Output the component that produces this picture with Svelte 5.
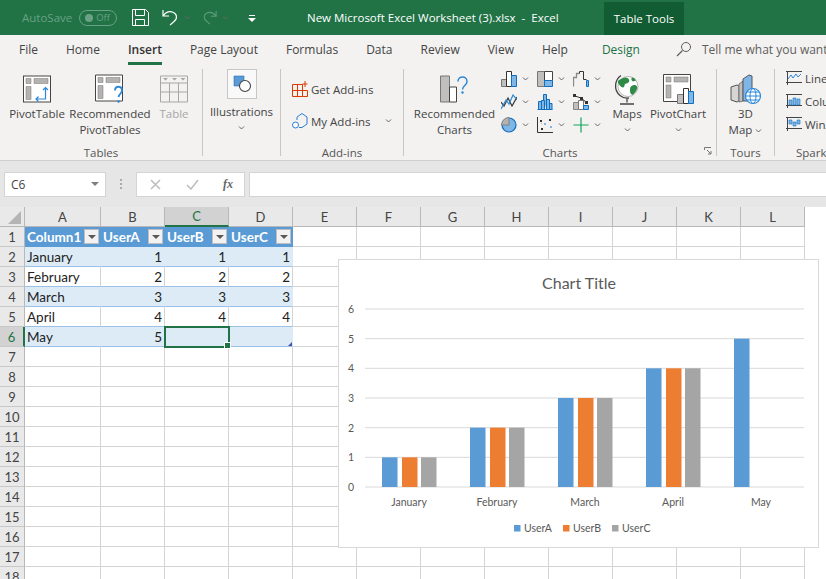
<script lang="ts">
	const tabs = ['File', 'Home', 'Insert', 'Page Layout', 'Formulas', 'Data', 'Review', 'View', 'Help'];
	const columns = ['A', 'B', 'C', 'D', 'E', 'F', 'G', 'H', 'I', 'J', 'K', 'L'];
	const rowNumbers = Array.from({ length: 18 }, (_, i) => i + 1);
	const headers = ['Column1', 'UserA', 'UserB', 'UserC'];
	const tableRows: (string | number | null)[][] = [
		['January', 1, 1, 1],
		['February', 2, 2, 2],
		['March', 3, 3, 3],
		['April', 4, 4, 4],
		['May', 5, null, null]
	];

	const series = [
		{ name: 'UserA', color: '#5b9bd5', offset: 43, values: [1, 2, 3, 4, 5] },
		{ name: 'UserB', color: '#ed7d31', offset: 63, values: [1, 2, 3, 4, 0] },
		{ name: 'UserC', color: '#a5a5a5', offset: 82, values: [1, 2, 3, 4, 0] }
	];
	const months = ['January', 'February', 'March', 'April', 'May'];
	const ticks = [0, 1, 2, 3, 4, 5, 6];
	const legendX = [175, 224, 273];
	const yFor = (value: number) => 227 - value * 29.67;
</script>

{#snippet chev(muted = false)}
	<svg class="chev" class:muted width="7" height="4" viewBox="0 0 7 4" aria-hidden="true">
		<path d="M1 .5l2.5 2.5L6 .5" fill="none" stroke="currentColor" />
	</svg>
{/snippet}

<div class="app">
	<header class="titlebar">
		<div class="qat">
			<span class="autosave">AutoSave</span>
			<span class="switch"><i></i><b>Off</b></span>
			<svg class="save" width="17" height="17" viewBox="0 0 17 17" aria-hidden="true">
				<path d="M.5.5h13l3 3v13H.5z M3.5.5v6h9v-6 M3.5 16.5v-6h9v6" fill="none" stroke="#fff" />
			</svg>
			<svg class="undo" width="17" height="17" viewBox="0 0 17 17" aria-hidden="true">
				<path d="M1 1v6h6M1.5 6.5C4 3 8 2 11.500 3.500c4 2 4 7 0 9.500L8 16" fill="none" stroke="#fff" stroke-width="1.2" />
			</svg>
			<span class="qchev">{@render chev()}</span>
			<svg class="redo" width="15" height="17" viewBox="0 0 17 17" aria-hidden="true">
				<path d="M16 1v6h-6M15.500 6.500C13 3 9 2 5.500 3.500c-4 2-4 7 0 9.500L9 16" fill="none" stroke="#5f9c7d" stroke-width="1.2" />
			</svg>
			<span class="qchev dim">{@render chev()}</span>
			<svg class="custom" width="8" height="8" viewBox="0 0 8 8" aria-hidden="true">
				<path d="M1 1h6v1H1zM0 4h8L4 8z" fill="#fff" />
			</svg>
		</div>
		<div class="doc">New Microsoft Excel Worksheet (3).xlsx  -  Excel</div>
		<div class="tool">Table Tools</div>
	</header>

	<nav class="tabs">
		{#each tabs as tab}
			<span class="tab" class:active={tab === 'Insert'}>{tab}</span>
		{/each}
		<span class="tab design">Design</span>
		<svg class="search" width="16" height="16" viewBox="0 0 16 16" aria-hidden="true">
			<circle cx="10" cy="6" r="4.500" fill="none" stroke="#605e5c" />
			<path d="M6.500 9.500L1 15" stroke="#605e5c" stroke-width="1.200" />
		</svg>
		<span class="tell">Tell me what you want to do</span>
	</nav>

	<section class="ribbon">
		<div class="group tables">
			<div class="body">
				<div class="big pivot">
					<svg width="28" height="28" viewBox="0 0 28 28" aria-hidden="true">
						<rect x=".5" y=".5" width="27" height="26" fill="#fff" stroke="#444" />
						<path d="M3 3h5v5H3zM11 3h14v5H11zM3 11h5v13H3z" fill="#b5b3b1" stroke="#777" stroke-width=".5" />
						<path d="M22.500 12v11.500H13M20 14.500l2.500-2.500 2.500 2.500M15.500 21L13 23.500l2.500 2.500" fill="none" stroke="#2b88d8" stroke-width="1.200" />
					</svg>
					<span>PivotTable</span>
				</div>
				<div class="big recommended">
					<svg width="30" height="30" viewBox="0 0 30 30" aria-hidden="true">
						<path d="M.5.500h27v26H.500z" fill="#fff" stroke="#444" />
						<path d="M3 3h5v5H3zM11 3h14v5H11zM3 11h5v13H3z" fill="#b5b3b1" stroke="#777" stroke-width=".5" />
						<path d="M20 16c0-5 7-5 7 0 0 3-3 3-3.500 6.500" fill="none" stroke="#2b88d8" stroke-width="1.800" />
						<circle cx="23.500" cy="27" r="1.300" fill="#2b88d8" />
					</svg>
					<span>Recommended<br />PivotTables</span>
				</div>
				<div class="big table off">
					<svg width="28" height="28" viewBox="0 0 28 28" aria-hidden="true">
						<path d="M.5.500h27v26H.500zM.5 7.500h27M.5 16.500h27M9.500 7.500v19M18.500 7.500v19" fill="#f3f2f1" stroke="#a8a6a4" />
						<path d="M3 2.500h5L5.500 5zM12 2.500h5L14.500 5zM20.500 2.500h5L23 5z" fill="#a8a6a4" />
					</svg>
					<span>Table</span>
				</div>
			</div>
			<div class="label">Tables</div>
		</div>
		<i class="sep"></i>

		<div class="group illus">
			<div class="body">
				<div class="big illustrations">
					<span class="boxed">
						<svg width="20" height="20" viewBox="0 0 20 20" aria-hidden="true">
							<path d="M2 2h10v10H2z" fill="#5b9bd5" stroke="#2b6cb0" stroke-width=".6" />
							<circle cx="13" cy="12" r="5.500" fill="#fff" stroke="#444" stroke-width="1.100" />
						</svg>
					</span>
					<span>Illustrations</span>
					<span class="under">{@render chev()}</span>
				</div>
			</div>
		</div>
		<i class="sep"></i>

		<div class="group addins">
			<div class="body stack">
				<div class="addin">
					<svg width="16" height="16" viewBox="0 0 16 16" aria-hidden="true">
						<path d="M.5 3.500h10v12H.5zM.5 9.500h15v6H10.500M5.500 3.500v12M10.500 9.500V3.500M13 0v6M10.500 3h5" fill="none" stroke="#d83b01" />
					</svg>
					<span>Get Add-ins</span>
				</div>
				<div class="addin">
					<svg width="16" height="16" viewBox="0 0 16 16" aria-hidden="true">
						<path d="M5 7V4l5-3.500L15 4v7l-5 3.500H7" fill="none" stroke="#2b7cd3" />
						<circle cx="3.500" cy="12" r="3" fill="#fff" stroke="#2b7cd3" />
					</svg>
					<span>My Add-ins</span>
					<span class="addchev">{@render chev()}</span>
				</div>
			</div>
			<div class="label">Add-ins</div>
		</div>
		<i class="sep"></i>

		<div class="group charts">
			<div class="body">
				<div class="big rec-charts">
					<svg width="30" height="28" viewBox="0 0 30 28" aria-hidden="true">
						<path d="M.5.500h9v26h-9z" fill="#c0bfbd" stroke="#777" />
						<path d="M9.500 11.500h7v15h-7z" fill="#fff" stroke="#444" />
						<path d="M18 6c0-6 9-6 9 0 0 4-4.500 4-4.500 8" fill="none" stroke="#2b88d8" stroke-width="1.500" />
						<circle cx="22.500" cy="17" r="1.200" fill="#2b88d8" />
					</svg>
					<span>Recommended<br />Charts</span>
				</div>
				<div class="minis">
					<div class="mini">
						<svg width="16" height="16" viewBox="0 0 16 16" aria-hidden="true">
							<path d="M.5 8.500h5v7h-5z" fill="#c0bfbd" stroke="#777" />
							<path d="M5.500.5h5v15h-5z" fill="#fff" stroke="#333" />
							<path d="M10.500 4.500h5v11h-5z" fill="#7fb6e6" stroke="#106ebe" />
						</svg>
						{@render chev()}
					</div>
					<div class="mini">
						<svg width="16" height="16" viewBox="0 0 16 16" aria-hidden="true">
							<path d="M.5.500h7v15h-7z" fill="#c0bfbd" stroke="#777" />
							<path d="M7.500.5h8v9h-8z" fill="#fff" stroke="#444" />
							<path d="M7.500 9.500h8v6h-8z" fill="#7fb6e6" stroke="#106ebe" />
						</svg>
						{@render chev()}
					</div>
					<div class="mini">
						<svg width="16" height="16" viewBox="0 0 16 16" aria-hidden="true">
							<path d="M.5 15.500v-9h3v-4h3" fill="none" stroke="#8a8886" stroke-width="1.300" />
							<path d="M6.500 2.500v-2h4v8h3" fill="none" stroke="#333" />
							<path d="M13.500 9.500h2v6h-2z" fill="#7fb6e6" stroke="#106ebe" />
						</svg>
						{@render chev()}
					</div>
					<div class="mini">
						<svg width="16" height="16" viewBox="0 0 16 16" aria-hidden="true">
							<path d="M0 8l3 4 4-8 4 8 5-9" fill="none" stroke="#333" stroke-width="1.200" />
							<path d="M0 15l5-9 3 4 4-9 4 5" fill="none" stroke="#2b88d8" stroke-width="1.200" />
						</svg>
						{@render chev()}
					</div>
					<div class="mini">
						<svg width="16" height="16" viewBox="0 0 16 16" aria-hidden="true">
							<path d="M1.500 15.500v-8h3v8zM4.500 15.500V6.500h3v9zM6.500 6V.5h3v15M9.500 15.500v-10h3v10zM12.500 15.500v-6h2.500v6zM.5 15.500h15" fill="#7fb6e6" stroke="#106ebe" />
						</svg>
						{@render chev()}
					</div>
					<div class="mini">
						<svg width="16" height="16" viewBox="0 0 16 16" aria-hidden="true">
							<path d="M.5 8.500h5v7h-5z" fill="#c0bfbd" stroke="#8a8886" />
							<path d="M5.500 6.500h5v9h-5z" fill="#fff" stroke="#777" />
							<path d="M10.500 11.500h5v4h-5z" fill="#7fb6e6" stroke="#106ebe" />
							<path d="M2 2l6 2 5 4" fill="none" stroke="#333" />
							<path d="M0 0h3v3H0zM7 3h3v3H7zM12 7h3v3h-3z" fill="#333" />
						</svg>
						{@render chev()}
					</div>
					<div class="mini">
						<svg width="16" height="16" viewBox="0 0 16 16" aria-hidden="true">
							<circle cx="8" cy="8" r="7" fill="#7fb6e6" stroke="#106ebe" stroke-width="1.200" />
							<path d="M8 8V.5A7.500 7.500 0 0 0 .5 8z" fill="#b5b3b1" stroke="#777" stroke-width=".8" />
						</svg>
						{@render chev()}
					</div>
					<div class="mini">
						<svg width="16" height="16" viewBox="0 0 16 16" aria-hidden="true">
							<path d="M.5 0v15.500H16" fill="none" stroke="#333" />
							<path d="M3 3h2v2H3zM12 2h2v2h-2zM4 11h2v2H4z" fill="#333" />
							<path d="M7 6h2v2H7zM13 9h2v2h-2zM4 6h1v1H4z" fill="#7fb6e6" />
						</svg>
						{@render chev()}
					</div>
					<div class="mini">
						<svg width="16" height="16" viewBox="0 0 16 16" aria-hidden="true">
							<path d="M8 .5v15M.5 8h15" stroke="#13a45a" stroke-width="1.200" />
						</svg>
						{@render chev()}
					</div>
				</div>
				<div class="big maps">
					<svg width="26" height="32" viewBox="0 0 26 32" aria-hidden="true">
						<circle cx="14" cy="13" r="10" fill="#fff" stroke="#8a8886" stroke-width=".6" />
						<path d="M8 5c3-2 6-1 7 1s-1 4-3 4-1 4-3 4-4-3-5-5 2-3 4-4zM17 13c2-2 5-2 6 0s-2 7-4 8-3-2-3-4 0-3 1-4zM18 4c2 0 3 1 4 3l-3 1c-2-1-2-3-1-4z" fill="#2e8b45" />
						<path d="M7 2C1 6-1 16 6 22c3 2.500 6 3 9 2.500" fill="none" stroke="#444" stroke-width="1.300" />
						<path d="M13 25v4M6 30.500h14" stroke="#444" stroke-width="1.300" />
					</svg>
					<span>Maps</span>
					<span class="under">{@render chev()}</span>
				</div>
				<div class="big pivotchart">
					<svg width="31" height="31" viewBox="0 0 31 31" aria-hidden="true">
						<path d="M.5.500h27v27H.500z" fill="#fff" stroke="#444" />
						<path d="M3 3h5v5H3zM11 3h14v5H11zM3 11h5v13H3z" fill="#b5b3b1" stroke="#777" stroke-width=".5" />
						<path d="M14.500 20.500h6v9h-6z" fill="#c0bfbd" stroke="#777" />
						<path d="M20.500 14.500h5v15h-5z" fill="#fff" stroke="#333" />
						<path d="M25.500 17.500h5v12h-5z" fill="#7fb6e6" stroke="#106ebe" />
					</svg>
					<span>PivotChart</span>
					<span class="under">{@render chev()}</span>
				</div>
			</div>
			<div class="label">Charts</div>
			<svg class="launcher" width="8" height="8" viewBox="0 0 8 8" aria-hidden="true">
				<path d="M.5 3V.5H7M.5.5" fill="none" stroke="#777" />
				<path d="M3 3l4 4M7 4v3H4" fill="none" stroke="#777" />
			</svg>
		</div>
		<i class="sep"></i>

		<div class="group tours">
			<div class="body">
				<div class="big threed">
					<svg width="31" height="31" viewBox="0 0 31 31" aria-hidden="true">
						<path d="M1 13l6-2 2 1v15l-2 1-6-2z" fill="#d6d5d3" stroke="#555" />
						<path d="M9 10l4-3v20l-4 1z" fill="#c0bfbd" stroke="#777" />
						<path d="M13 5l6-4 3 1v16l-3 9h-6z" fill="#7fb6e6" stroke="#555" />
						<circle cx="23" cy="22" r="7.500" fill="#fff" stroke="#2b88d8" stroke-width="1.200" />
						<ellipse cx="23" cy="22" rx="3" ry="7.500" fill="none" stroke="#2b88d8" />
						<path d="M15.500 22h15M17 18h12M17 26h12" stroke="#2b88d8" />
					</svg>
					<span>3D<br />Map {@render chev()}</span>
				</div>
			</div>
			<div class="label">Tours</div>
		</div>
		<i class="sep"></i>

		<div class="group sparks">
			<div class="body stack tight">
				<div class="spark">
					<svg width="16" height="14" viewBox="0 0 16 14" aria-hidden="true">
						<path d="M0 .5h16M0 11.500h16M1.500 0v14" stroke="#444" />
						<path d="M2 8l3-4 2 3 3-4 2 3 3-3" fill="none" stroke="#2b88d8" />
					</svg>
					<span>Line</span>
				</div>
				<div class="spark">
					<svg width="16" height="14" viewBox="0 0 16 14" aria-hidden="true">
						<path d="M0 .5h16M0 11.500h16M1.500 0v14" stroke="#444" />
						<path d="M3 6h3v5H3zM7 4h3v7H7zM11 5h3v6h-3z" fill="#7fb6e6" stroke="#106ebe" stroke-width=".6" />
					</svg>
					<span>Column</span>
				</div>
				<div class="spark">
					<svg width="16" height="14" viewBox="0 0 16 14" aria-hidden="true">
						<path d="M0 .5h16M0 11.500h16M1.500 0v14" stroke="#444" />
						<path d="M3 3h3v4H3zM7 5h3v4H7zM11 3h3v4h-3z" fill="#7fb6e6" stroke="#106ebe" stroke-width=".6" />
					</svg>
					<span>Win/Loss</span>
				</div>
			</div>
			<div class="label">Sparklines</div>
		</div>
	</section>

	<div class="formula">
		<div class="namebox">
			<span>C6</span>
			<i class="caret"></i>
		</div>
		<div class="grip"></div>
		<div class="fbuttons">
			<svg width="11" height="11" viewBox="0 0 11 11" aria-hidden="true">
				<path d="M1 1l9 9M10 1l-9 9" stroke="#bdbdbd" stroke-width="1.500" />
			</svg>
			<svg width="13" height="11" viewBox="0 0 13 11" aria-hidden="true">
				<path d="M1 6l4 4 7-9" fill="none" stroke="#bdbdbd" stroke-width="1.500" />
			</svg>
			<span class="fx">fx</span>
		</div>
		<div class="finput"></div>
	</div>

	<div class="sheet">
		<div class="grid">
			<div class="corner"><i></i></div>
			{#each columns as col}
				<div class="colhead" class:selected={col === 'C'}>{col}</div>
			{/each}

			{#each rowNumbers as row}
				<div class="rowhead" class:selected={row === 6}>{row}</div>
				{#each columns as col, c}
					{#if row === 1 && c < 4}
						<div class="cell head">
							<span>{headers[c]}</span>
							<i class="filter"></i>
						</div>
					{:else if row > 1 && row <= 6 && c < 4}
						{@const value = tableRows[row - 2][c]}
						<div
							class="cell body-cell"
							class:band={row % 2 === 0}
							class:num={c > 0}
							class:active={row === 6 && c === 2}
							class:end={row === 6 && c === 3}
						>
							{value ?? ''}
						</div>
					{:else}
						<div class="cell"></div>
					{/if}
				{/each}
			{/each}
		</div>

		<div class="chart">
			<svg width="480" height="288" viewBox="0 0 480 288" role="img" aria-label="Chart Title">
				<text class="title" x="240" y="29" text-anchor="middle">Chart Title</text>
				{#each ticks as tick}
					<line x1="26" x2="465" y1={yFor(tick)} y2={yFor(tick)} stroke="#d9d9d9" />
					<text class="axis" x="12" y={yFor(tick) + 4} text-anchor="middle">{tick}</text>
				{/each}
				{#each series as s}
					{#each s.values as value, i}
						{#if value > 0}
							<rect x={s.offset + i * 88} y={yFor(value)} width="15.500" height={value * 29.67} fill={s.color} />
						{/if}
					{/each}
				{/each}
				{#each months as month, i}
					<text class="axis" x={70 + i * 88} y="246" text-anchor="middle">{month}</text>
				{/each}
				{#each series as s, i}
					<rect x={legendX[i]} y="265" width="6.500" height="6.500" fill={s.color} />
					<text class="axis" x={legendX[i] + 10} y="272">{s.name}</text>
				{/each}
			</svg>
		</div>
	</div>
</div>

<style>
	:global(body) {
		margin: 0;
		overflow: hidden;
	}

	.app {
		width: 826px;
		height: 579px;
		overflow: hidden;
		display: flex;
		flex-direction: column;
		font-family: 'Open Sans', 'Noto Sans', sans-serif;
		font-size: 11.5px;
		color: #444;
		background: #fff;
	}

	/* title bar */
	.titlebar {
		flex: none;
		height: 35px;
		display: flex;
		background: #217346;
		color: #fff;
	}

	.qat {
		width: 307px;
		flex: none;
		box-sizing: border-box;
		padding-left: 22px;
		display: flex;
		align-items: center;
	}

	.autosave {
		color: #6aa084;
		font-size: 11.500px;
		width: 57px;
	}

	.switch {
		width: 38px;
		height: 16px;
		box-sizing: border-box;
		border: 1px solid #6aa084;
		border-radius: 8px;
		display: flex;
		align-items: center;
		padding: 0 6px 0 5px;
		justify-content: space-between;
		color: #6aa084;
		font-size: 9.500px;
	}

	.switch i {
		width: 8px;
		height: 8px;
		border-radius: 50%;
		background: #6aa084;
	}

	.switch b {
		font-weight: 400;
	}

	.save {
		margin-left: 15px;
	}

	.undo {
		margin-left: 13px;
	}

	.qchev {
		margin-left: 5px;
		display: flex;
		color: #fff;
	}

	.qchev.dim {
		color: #5f9c7d;
	}

	.redo {
		margin-left: 11px;
	}

	.custom {
		margin-left: 19px;
	}

	.doc {
		width: 297px;
		flex: none;
		line-height: 35px;
		font-size: 11.500px;
		white-space: pre;
	}

	.tool {
		width: 80px;
		flex: none;
		margin-top: 2px;
		background: #115c32;
		text-align: center;
		line-height: 33px;
		font-size: 11.500px;
	}

	/* tabs */
	.tabs {
		flex: none;
		height: 28px;
		display: flex;
		align-items: center;
		gap: 28px;
		padding-left: 19px;
		background: #f3f2f1;
		white-space: nowrap;
		font-size: 12px;
	}

	.tab {
		position: relative;
		flex: none;
	}

	.tab.active {
		color: #333;
		font-weight: 600;
	}

	.tab.active::after {
		content: '';
		position: absolute;
		left: 0;
		right: 0;
		bottom: -7px;
		height: 3px;
		background: #217346;
	}

	.design {
		color: #217346;
		margin-left: 6px;
	}

	.search {
		flex: none;
		margin-left: 8px;
	}

	.tell {
		margin-left: -18px;
		flex: none;
		color: #605e5c;
	}

	/* ribbon */
	.ribbon {
		flex: none;
		height: 98px;
		display: flex;
		background: #f3f2f1;
		border-bottom: 1px solid #d2d0ce;
		box-sizing: border-box;
		overflow: hidden;
		font-size: 11.500px;
	}

	.sep {
		flex: none;
		width: 1px;
		margin: 6px 0 4px;
		background: #c8c6c4;
	}

	.group {
		position: relative;
		flex: none;
		display: flex;
		flex-direction: column;
	}

	.tables {
		width: 202px;
	}

	.illus {
		width: 77px;
	}

	.addins {
		width: 122px;
	}

	.charts {
		width: 312px;
	}

	.tours {
		width: 57px;
	}

	.sparks {
		width: 120px;
	}

	.body {
		flex: none;
		height: 82px;
		display: flex;
		box-sizing: border-box;
	}

	.label {
		text-align: center;
		line-height: 16px;
		color: #555;
	}

	.big {
		flex: none;
		display: flex;
		flex-direction: column;
		align-items: center;
		text-align: center;
		padding-top: 10px;
		line-height: 16px;
		white-space: nowrap;
	}

	.big > svg {
		flex: none;
		height: 33px;
		overflow: visible;
		align-self: center;
		margin-bottom: 0;
	}

	.big svg {
		display: block;
	}

	.big > span svg {
		display: inline-block;
		vertical-align: middle;
	}

	.under {
		display: flex;
		height: 16px;
		align-items: center;
	}

	.pivot {
		width: 58px;
		margin-left: 8px;
	}

	.recommended {
		width: 80px;
		margin-left: 4px;
	}

	.table {
		width: 48px;
	}

	.off {
		color: #a6a6a6;
	}

	.illustrations {
		width: 77px;
		padding-top: 6px;
	}

	.boxed {
		width: 30px;
		height: 30px;
		box-sizing: border-box;
		border: 1px solid #c6c6c6;
		background: #f9f9f9;
		display: flex;
		align-items: center;
		justify-content: center;
		margin-bottom: 5px;
	}

	.stack {
		flex-direction: column;
		padding: 16px 0 0 11px;
		gap: 12px;
	}

	.addin {
		height: 20px;
		display: flex;
		align-items: center;
		gap: 3px;
		white-space: nowrap;
	}

	.addchev {
		display: flex;
		margin-left: 11px;
	}

	.rec-charts {
		width: 81px;
		margin-left: 10px;
	}

	.minis {
		flex: none;
		margin: 4px 0 0 6px;
		display: grid;
		grid-template-columns: repeat(3, 32px);
		grid-auto-rows: 23px;
		column-gap: 4px;
		align-content: start;
	}

	.mini {
		display: flex;
		align-items: center;
		gap: 5px;
	}

	.chev {
		flex: none;
		color: #666;
	}

	.maps {
		width: 44px;
	}

	.pivotchart {
		width: 58px;
	}

	.threed {
		width: 57px;
	}

	.tight {
		padding-top: 5px;
		gap: 3px;
	}

	.spark {
		height: 20px;
		display: flex;
		align-items: center;
		gap: 3px;
		white-space: nowrap;
	}

	.sparks .label {
		text-align: left;
		padding-left: 21px;
		white-space: nowrap;
	}

	.launcher {
		position: absolute;
		right: 4px;
		bottom: 5px;
	}

	/* formula bar */
	.formula {
		flex: none;
		height: 46px;
		display: flex;
		align-items: center;
		background: #e6e6e6;
		padding-left: 4px;
		box-sizing: border-box;
	}

	.namebox,
	.fbuttons,
	.finput {
		height: 25px;
		box-sizing: border-box;
		background: #fff;
		border: 1px solid #d4d4d4;
	}

	.namebox {
		width: 102px;
		display: flex;
		align-items: center;
		justify-content: space-between;
		padding: 0 6px;
		font-size: 12px;
		color: #444;
	}

	.caret {
		border-left: 4px solid transparent;
		border-right: 4px solid transparent;
		border-top: 4px solid #7f7f7f;
	}

	.grip {
		width: 2px;
		height: 10px;
		margin: 0 14px;
		background: repeating-linear-gradient(#aaa 0 2px, transparent 2px 4px);
	}

	.fbuttons {
		width: 109px;
		display: flex;
		align-items: center;
		justify-content: space-between;
		padding: 0 11px 0 13px;
	}

	.fx {
		font-family: 'Liberation Serif', serif;
		font-style: italic;
		font-weight: 700;
		font-size: 12px;
		color: #666;
	}

	.finput {
		margin-left: 4px;
		flex: 1;
		border-right: none;
	}

	/* sheet */
	.sheet {
		position: relative;
		flex: 1;
		overflow: hidden;
	}

	.grid {
		display: grid;
		grid-template-columns: 25px 76px repeat(11, 64px);
		grid-template-rows: 20px;
		grid-auto-rows: 20px;
		font-family: Lato, 'Liberation Sans', sans-serif;
		font-size: 13.500px;
		color: #222;
	}

	.corner {
		background: #e9e9e9;
		border-right: 1px solid #b8b8b8;
		border-bottom: 1px solid #b8b8b8;
		box-sizing: border-box;
		position: relative;
	}

	.corner i {
		position: absolute;
		left: 8px;
		top: 4px;
		border-left: 13px solid transparent;
		border-bottom: 13px solid #b4b4b4;
	}

	.colhead,
	.rowhead {
		box-sizing: border-box;
		background: #e9e9e9;
		display: flex;
		align-items: center;
		justify-content: center;
		color: #444;
		font-size: 13px;
	}

	.colhead {
		border-right: 1px solid #b8b8b8;
		border-bottom: 1px solid #b8b8b8;
	}

	.rowhead {
		border-right: 1px solid #b8b8b8;
		border-bottom: 1px solid #c8c8c8;
	}

	.colhead.selected {
		background: #d2d2d2;
		color: #217346;
		border-bottom: 2px solid #217346;
	}

	.rowhead.selected {
		background: #d2d2d2;
		color: #217346;
		border-right: 2px solid #217346;
	}

	.cell {
		box-sizing: border-box;
		border-right: 1px solid #d4d4d4;
		border-bottom: 1px solid #d4d4d4;
		padding: 0 2px;
		display: flex;
		align-items: center;
		white-space: nowrap;
		overflow: hidden;
		min-width: 0;
	}

	.cell.head {
		background: #5b9bd5;
		border-color: #5b9bd5;
		color: #fff;
		font-weight: 700;
		justify-content: space-between;
		padding-right: 1px;
	}

	.filter {
		flex: none;
		position: relative;
		width: 15px;
		height: 15px;
		box-sizing: border-box;
		background: #f2f2f2;
		border: 1px solid #bfbfbf;
	}

	.filter::after {
		content: '';
		position: absolute;
		left: 3px;
		top: 5px;
		border-left: 4px solid transparent;
		border-right: 4px solid transparent;
		border-top: 4px solid #595959;
	}

	.body-cell {
		border-bottom-color: #9bc2e6;
		background: #fff;
	}

	.body-cell.band {
		background: #ddebf7;
		border-right-color: #ddebf7;
	}

	.body-cell:nth-child(14n + 5) {
		border-right-color: #9bc2e6;
	}

	.body-cell.num {
		justify-content: flex-end;
	}

	.body-cell.active {
		overflow: visible;
		position: relative;
		outline: 2px solid #217346;
		outline-offset: -1px;
		border-color: transparent;
		z-index: 1;
	}

	.body-cell.active::after {
		content: '';
		position: absolute;
		right: -3px;
		bottom: -3px;
		width: 5px;
		height: 5px;
		background: #217346;
		border: 1px solid #fff;
	}

	.body-cell.end {
		position: relative;
	}

	.body-cell.end::after {
		content: '';
		position: absolute;
		right: 0;
		bottom: 0;
		border-left: 4px solid transparent;
		border-bottom: 4px solid #3f51b5;
	}

	.chart {
		position: absolute;
		left: 338px;
		top: 52px;
		width: 481px;
		height: 289px;
		box-sizing: border-box;
		background: #fff;
		border: 1px solid #d9d9d9;
		font-family: Lato, 'Liberation Sans', sans-serif;
	}

	.chart svg {
		display: block;
	}

	.title {
		font-size: 16px;
		fill: #595959;
	}

	.axis {
		font-size: 10.500px;
		fill: #595959;
	}
</style>
